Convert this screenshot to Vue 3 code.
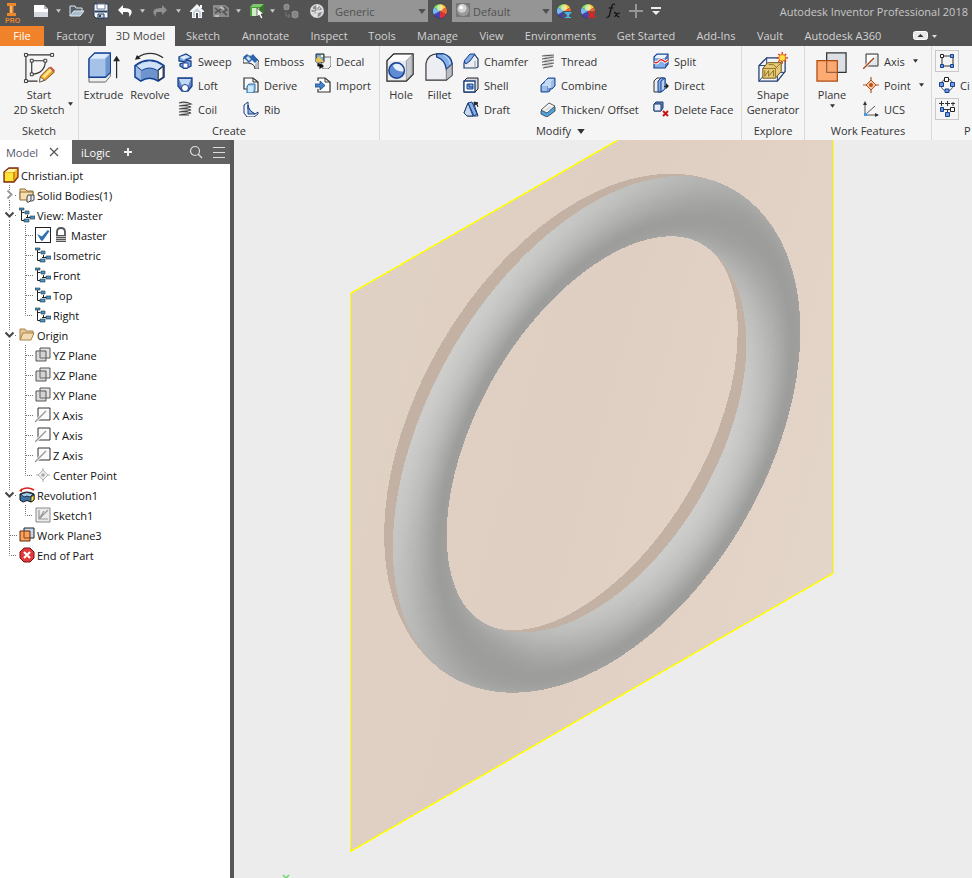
<script setup>
import { ref } from 'vue'

const caret = '<path d="M0 0h6L3 4z" fill="currentColor"/>'
const wheel = '<circle cx="8" cy="8" r="7.5" fill="#2b3a5c"/><path d="M8 8V1a7 7 0 0 1 6.1 3.5z" fill="#f6c53a"/><path d="M8 8l6.100-3.500a7 7 0 0 1 0 7z" fill="#ee6a2a"/><path d="M8 8l6.100 3.500A7 7 0 0 1 8 15z" fill="#d8323c"/><path d="M8 8v7a7 7 0 0 1-6.100-3.500z" fill="#4a3fb0"/><path d="M8 8l-6.100 3.500a7 7 0 0 1 0-7z" fill="#78b8ee"/><path d="M8 8L1.900 4.500A7 7 0 0 1 8 1z" fill="#8cd860"/><circle cx="8" cy="5" r="3" fill="#fff" opacity=".5"/>'

const icons = {
  new: '<path d="M1 2h10l4 4v8H1z" fill="#fff"/><path d="M1 9h14v5H1z" fill="#d4d8df"/><path d="M11 2v4h4z" fill="#aeb6c0"/>',
  open: '<path d="M1 13V3h5l1 2h6v3" fill="#535f6b" stroke="#e3e9ef"/><path d="M5 8h10l-4 5H1z" fill="#a9bccd" stroke="#e3e9ef"/>',
  save: '<path d="M1 1h14v14H3l-2-2z" fill="#f2f5fa" stroke="#29405f"/><path d="M4 1h8v5H4z" fill="#fff" stroke="#6a7a94"/><path d="M1.500 7.500h13v2h-13z" fill="#29405f"/><path d="M5 11h6v4H5z" fill="#cfd6e2" stroke="#29405f"/><path d="M6 12h2v2H6z" fill="#29405f"/>',
  undo: '<path d="M6 2L1 7l5 5V9h4q3 0 2 5 4-4 2-7-2-2-8-2z" fill="#fff"/>',
  redo: '<path d="M10 2l5 5-5 5V9H6q-3 0-2 5-4-4-2-7 2-2 8-2z" fill="#919191"/>',
  home: '<path d="M8 1L1 8v1h2v6h4v-5h2v5h4V9h2V8z" fill="#f3f5f8"/><path d="M11 2h2v3h-2z" fill="#fff"/><path d="M8 5l4 4v5h-2V9H6v5H4V9z" fill="#c8ced8"/><path d="M6 9h4v6H6z" fill="#fff"/><path d="M7 10h2v5H7z" fill="#4a515e"/>',
  update: '<path d="M0 2h12l4 3v9H0z" fill="#8b8b8b"/><path d="M2 10l9-6 3 3-4 2 4 3M2 5l6 5" fill="none" stroke="#555" stroke-width="1.600"/><path d="M7 4l4 2M2 13h4" stroke="#bdbdbd" stroke-width="2"/>',
  select: '<path d="M1 4l3-3h11l-3 3z" fill="#7cc86a"/><path d="M1 4h10v9H1z" fill="#4e9a3d"/><path d="M3 5h7v8H3z" fill="#cfeec6"/><path d="M12 4l3-3v9l-3 3z" fill="#2f7a22"/><path d="M8 5l7 6h-3l2 4-2 1-2-4-2 2z" fill="#fff" stroke="#333" stroke-width=".7"/>',
  link: '<g fill="#858585" stroke="#a4a4a4" stroke-width=".6"><path d="M1 2q3-2 5 0v4q-3 2-5 0zM9 9q3-2 6 0v5q-3 2-6 0z"/></g><path d="M3 9v4h4M5 11l2 2-2 2" fill="none" stroke="#777"/>',
  globe: '<circle cx="8" cy="8" r="7" fill="#d8d8d8"/><path d="M4 4l3-2 1 3 3-2 2 4-4 1-1 3-3-1-3-2 2-2zM9 10l4-1-2 4-3 1z" fill="#8e8e8e"/><path d="M2 6l4 1M8 2v12M2 10l12-3M5 14l7-11" stroke="#f2f2f2" stroke-width=".8"/>',
  wheel,
  wheeldown: wheel + '<path d="M7 8h9v8H7z" fill="#535353"/><path d="M8 9h8l-3 3v2h2v1H9v-1h2v-2z" fill="#45b8f0"/>',
  wheelx: wheel + '<path d="M9 9l6 6M15 9l-6 6" stroke="#535353" stroke-width="4"/><path d="M9 9l6 6M15 9l-6 6" stroke="#f02020" stroke-width="1.800"/>',
  fx: '<path d="M10 1.500Q7.500 0 6.500 4L4.500 12q-1 3-3 2M3.500 5h5" fill="none" stroke="#111" stroke-width="1.200"/><path d="M9 10q2-1 2.500 1.500T14.500 14M15 10q-3 0-5.500 4" fill="none" stroke="#111" stroke-width="1.200"/>',
  plus: '<path d="M8 1v14M1 8h14" stroke="#969696" stroke-width="2"/>',
  more: '<path d="M3 4h10v2H3zM4 8h8l-4 4z" fill="#eee"/>',
  ball: '<path d="M0 0h16v16H0z" fill="#777"/><circle cx="8" cy="8" r="7" fill="#9c9c9c"/><circle cx="7" cy="6" r="5" fill="#d2d2d2"/><circle cx="6" cy="5" r="2" fill="#fff"/>',

  start: '<g fill="none" stroke="#333" stroke-width="1.200"><path d="M30 3H3v27h12"/><path d="M9 9v14q14-1 14-14z"/></g><g fill="#fff" stroke="#333"><path d="M1.500 1.500h3v3h-3zM28.500 1.500h3v3h-3zM1.500 28.500h3v3h-3zM7.500 7.500h3v3h-3zM21.500 7.500h3v3h-3zM7.500 21.500h3v3h-3z"/></g><path d="M17 31l1-6L27 16l5 5-9 8z" fill="#f3a62a" stroke="#6a4a20"/><path d="M20 25l8-8 2 2-8 8z" fill="#ffe58a"/><path d="M27 16l2-1 4 4-1 2z" fill="#c75a50"/><path d="M17 31l1-5 4 3z" fill="#fff" stroke="#555" stroke-width=".7"/>',
  extrude: '<path d="M1 8l6-6h16v23l-5 6H1z" fill="#eceef0" stroke="#666"/><path d="M1 7l6-6h16v20l-5 5H1z" fill="#a5c3e8" stroke="#123f94" stroke-width="1.400"/><path d="M2 7l5-5h15l-5 5z" fill="#dceafa"/><path d="M18 7l4-4v18l-4 4z" fill="#6d94cc"/><path d="M29.500 27V6M27 9l2.500-4L32 9z" fill="#222" stroke="#222" stroke-width="1.200"/>',
  revolve: '<path d="M1 14q15-11 30 0v12l-6 4q-9-6-18 0l-6-4z" fill="#6d94cc" stroke="#123f94" stroke-width="1.500"/><path d="M2 14q14-10 28 0l-6 5q-8-5-16 0z" fill="#cfe2f7" stroke="#123f94"/><path d="M25 19l5-4v11l-5 3z" fill="#fff" stroke="#222"/><path d="M2 15l5 4v10l-5-4z" fill="#9dbce4"/><path d="M3 6q14-9 27 0" fill="none" stroke="#333" stroke-width="1.300"/><path d="M1 8l2-5 4 4z" fill="#222"/>',
  sweep: '<path d="M14 4L9 1 2 4v4l6 1-5 2v2l5 3 6-3V8L9 7l5-2z" fill="#86a9dc" stroke="#17408f" stroke-width="1.300"/><path d="M3 4l6-2 4 2-4 1-2 2z" fill="#dceafa"/><path d="M6 10h5v5H6z" fill="#fff" stroke="#17408f"/>',
  loft: '<path d="M1 1h14v8l-4 5H5L1 9z" fill="#5d82be" stroke="#17408f" stroke-width="1.300"/><path d="M2 2h12l-3 7H5z" fill="#c3daf4"/><circle cx="8" cy="11" r="3.500" fill="#fff" stroke="#17408f"/>',
  coil: '<g fill="none" stroke="#444" stroke-width="1.200"><path d="M2 2q6-2 12 1L2 5q6-1 12 1L2 8q6-1 12 1L2 11q6-1 12 1L2 14h10"/></g><path d="M4 3l8 0M4 6h8M4 9h8M4 12h8" stroke="#bbb" stroke-width=".8"/>',
  emboss: '<path d="M0 6l5-3q9 0 11 6v7h-4Q12 9 0 10z" fill="#f4f6f8" stroke="#333"/><path d="M0 4l4-3 3 3 3-3 5 6-3 3-3-3-3 3z" fill="#2e63ad"/><path d="M3 5l2-2 3 3-2 2z" fill="#cfe2f7"/><path d="M12 11l3-3v7h-3z" fill="#b9bec6"/>',
  derive: '<path d="M4 12H1V1h9l5 4v10h-4" fill="#f8f9fa" stroke="#333" stroke-width="1.200"/><path d="M10 1v4h5" fill="none" stroke="#333"/><path d="M4 9l2-2h6v6l-2 3H4z" fill="#9fcbea" stroke="#276da5"/><path d="M5 9h5v6H5z" fill="#cfe7f7"/>',
  rib: '<path d="M1 4l4-3v7l7 5 3-2v2l-4 3H4l-3-4z" fill="#f2f4f7" stroke="#1f3d6f"/><path d="M5 4q1 6 7 9H5z" fill="#86b0e4" stroke="#17408f"/>',
  decal: '<path d="M6 7l3-3h7v9l-3 3H8z" fill="#eef0f2" stroke="#666"/><path d="M1 1h8v8H1z" fill="#6ea3da" stroke="#222"/><path d="M1 6l3-3 5 6H1z" fill="#e0c256"/><circle cx="7" cy="3" r="1.200" fill="#fff8b0"/><path d="M3 10v3h4M5 11l3 2-3 2z" fill="#111" stroke="#111" stroke-width="1.200"/>',
  import: '<path d="M3 4V1h7l5 4v10H3v-3" fill="#fff" stroke="#333" stroke-width="1.200"/><path d="M10 1v4h5" fill="none" stroke="#333"/><path d="M0 7h5V4l5 4.500L5 13v-3H0z" fill="#3f86cf" stroke="#17407a" stroke-width=".8"/>',
  hole: '<path d="M2 9l7-7h20v21l-7 7H2z" fill="#e9ebef" stroke="#222" stroke-width="1.300"/><path d="M3 9l6-6h19l-6 6z" fill="#fff"/><path d="M22 9l6-6v20l-6 6z" fill="#c2c6cd" stroke="#777" stroke-width=".6"/><circle cx="12" cy="19" r="8" fill="#5f8cd2" stroke="#17408f" stroke-width="1.500"/><path d="M12 12a7 7 0 0 1 7 8q-8 1-11-6 2-2 4-2z" fill="#e5eefa"/>',
  fillet: '<path d="M2 29V12Q4 2 14 2h6l9 10v12l-6 5z" fill="#eceef1" stroke="#333" stroke-width="1.200"/><path d="M13 2h7q8 2 9 10l-6 6Q22 8 13 5z" fill="#86aee6" stroke="#17408f" stroke-width="1.300"/><path d="M23 18l6-5v11l-6 5z" fill="#b7bcc5" stroke="#555" stroke-width=".7"/><path d="M20 3q6 3 7 10" stroke="#cfe2f7" fill="none"/>',
  chamfer: '<path d="M1 10l7-8h4l3 4v8l-2 1H1z" fill="#eceef1" stroke="#1f3d6f" stroke-width="1.200"/><path d="M1 8l6-7h5L7 8l-4 3z" fill="#86aee6" stroke="#17408f"/><path d="M12 8v7" stroke="#999"/>',
  shell: '<path d="M1 4l3-3h11v11l-3 3H1z" fill="#d7dbe2" stroke="#222"/><path d="M1 4h11v11H1z" fill="#fff" stroke="#1c3f7e" stroke-width="1.300"/><path d="M4 7h6v5H4z" fill="#86aee6" stroke="#17408f"/><path d="M6 7v3h4" fill="none" stroke="#17408f"/>',
  draft: '<path d="M1 12L5 2l6 1 4 12H9l-5 0z" fill="#eceef1" stroke="#1f3d6f"/><path d="M5 2l4-1 5 12-3 2z" fill="#86aee6" stroke="#17408f"/><path d="M5 2l5 13H4l-3-3z" fill="#c5d9f0" stroke="#1f3d6f"/><path d="M15 6q0-3-3-4M12 4l-1-3 4 1z" stroke="#222" fill="#222"/>',
  thread: '<path d="M4 1h8v14H4z" fill="#e4e4e4"/><path d="M2 3l12-1M2 6l12-2M2 9l12-2M2 12l12-2M3 15l10-2" stroke="#555" stroke-width="1.100"/><path d="M5 4.500l8-1M5 7.500l8-1M5 10.500l8-1M5 13.500l8-1" stroke="#aaa" stroke-width=".7"/>',
  combine: '<path d="M5 4l3-3h7v8l-3 3h-2v2l-2 1H1V8l3-3z" fill="#6f98d0" stroke="#1f4a96"/><path d="M5 4l3-2h6l-3 3v6H8V9H2V8l3-2z" fill="#c3daf4"/><path d="M2 9h5v5H2zM11 5l3-3v7l-3 2z" fill="#9dbde6"/>',
  thicken: '<path d="M1 10l8-7 6 3v4l-8 6-6-3z" fill="#4fa3df" stroke="#333" stroke-width=".8"/><path d="M1 9l8-7 6 3-8 7z" fill="#f7f7f7" stroke="#333" stroke-width=".8"/><path d="M4 9l5-4 3 1-5 4z" fill="#dde0e4"/>',
  split: '<path d="M1 4l3-3h11v10l-3 4H1z" fill="#86aee6" stroke="#17408f" stroke-width="1.200"/><path d="M2 4l2-2h10l-2 3H2z" fill="#eef4fb"/><path d="M12 5l2-3v9l-2 3z" fill="#4d73b4"/><path d="M1 9q3 2 5-1t6 1l3-2" fill="none" stroke="#fff" stroke-width="3"/><path d="M1 9q3 2 5-1t6 1l3-2" fill="none" stroke="#e02020" stroke-width="1.300"/>',
  direct: '<path d="M1 4l3-3h7v11l-3 3H1z" fill="#eceef1" stroke="#333"/><path d="M5 4l3-3h4v11l-4 3H5z" fill="#86aee6" stroke="#17408f"/><path d="M8 4l4-3v11l-4 3z" fill="#b9d2f0" stroke="#17408f"/><path d="M11 9h2V6l3 3-3 3v-2h-2z" fill="#222"/>',
  delete: '<path d="M1 3l2-2h7v6l-2 3H1z" fill="#5f86c4" stroke="#1f3d6f"/><path d="M1 3h7v7H1z" fill="#e3ecf8" stroke="#1f3d6f"/><path d="M10 10l5 5M15 10l-5 5" stroke="#c81414" stroke-width="2"/>',
  shape: '<path d="M2 14L10 6h19v14l-8 10H2z" fill="#f2f5fa" stroke="#1f3d6f" stroke-width="1.300"/><path d="M2 14h19v16M21 14l8-8M10 6v15h19M10 21l-8 9" fill="none" stroke="#1f3d6f"/><path d="M6 17l5-6h14v9l-6 7H6z" fill="#e7cb78" stroke="#6f5512"/><path d="M6 17h13v10M19 17l6-6M8 19v6l4-6v6l5-6v6M12 13h5l4 4" fill="none" stroke="#8f7428"/><path d="M26 0v12M20 6h12M22 2l8 8M30 2l-8 8" stroke="#e12a14" stroke-width="1.300"/><circle cx="26" cy="6" r="3.500" fill="#ffe344" stroke="#e86b14"/>',
  plane: '<path d="M11 1h20v20H11z" fill="#dce0e6" stroke="#333" stroke-width="1.300"/><path d="M1 9h21v21H1z" fill="#ff9d5c" fill-opacity=".85" stroke="#b04c12" stroke-width="1.300"/><path d="M11 9v12h11" fill="none" stroke="#8a5a3c"/>',
  axis: '<path d="M3 1h12v12H3z" fill="#e3e6ea" stroke="#333"/><path d="M4 2h10L4 12z" fill="#fff"/><path d="M0 16L11 5" stroke="#fff" stroke-width="3"/><path d="M0 16L11 5" stroke="#a3481a" stroke-width="1.500"/>',
  point: '<path d="M8 3l5 5-5 5-5-5z" fill="#f7c6a0" stroke="#b25420"/><path d="M8 0v4M8 12v4M0 8h4M12 8h4" stroke="#b25420" stroke-width="1.200"/><circle cx="8" cy="8" r="2" fill="#b25420"/>',
  ucs: '<path d="M2 14V2M2 14h13M2 14L12 5" fill="none" stroke="#555"/><path d="M0 4l2-4 2 4zM12 12l4 2-4 2z" fill="#333"/><path d="M1 12h3v3H1z" fill="#3f9be8"/>',
  rect: '<path d="M3 3h11v10H3z" fill="none" stroke="#333"/><g fill="#6f9be0" stroke="#17408f"><path d="M1.500 11.500h3v3h-3zM11.500 11.500h3v3h-3zM11.500 1.500h3v3h-3z"/></g><path d="M1.500 1.500h3v3h-3z" fill="#fff" stroke="#222"/>',
  circ: '<circle cx="8" cy="8" r="6" fill="none" stroke="#555"/><g fill="#6f9be0" stroke="#17408f"><path d="M.500 5.500h4v4h-4zM11.500 5.500h4v4h-4zM6 12h4v3.500H6z"/></g><path d="M5.500.500h4v4h-4z" fill="#fff" stroke="#222"/>',
  sketchpat: '<path d="M2.500 0v5M0 2.500h5M8.500 0v5M6 2.500h5M14 1v4M12 2.500h4" stroke="#333"/><path d="M3 8.500h11M8.500 8v6" stroke="#333"/><g fill="#6f9be0" stroke="#17408f"><path d="M1.500 6.500h3v4h-3zM6.500 11.500h4v4h-4z"/></g><path d="M11.500 6.500h4v4h-4z" fill="#fff" stroke="#222"/>',

  part: '<path d="M1 5l5-4h9v9l-4 5H1z" fill="#f5b81c" stroke="#7a2b12" stroke-width="1.300"/><path d="M2 5l4-3h8l-3 3z" fill="#fff6a8"/><path d="M2 6h8v8H2z" fill="#ffe437"/><path d="M11 5v10" stroke="#b5651a"/>',
  bodies: '<path d="M1 12V2h5l2 2h6v4" fill="#f4d9a0" stroke="#8a6a3a"/><path d="M1 12V5h13v4l-4 4H1z" fill="#f7dfad" stroke="#8a6a3a"/><path d="M8 10l1-2h3v5l-2 2H8zM12 8h3v5l-2 1h-2" fill="#e8ebef" stroke="#444"/>',
  view: '<path d="M2.500 3v10.500h3M2.500 5.500h3M8.500 8v3M7 10.500h4" fill="none" stroke="#222"/><path d="M0 1h5v2H0zM6 4h4v3H6zM11 9h5v3h-5zM5 12h5v3H5z" fill="#4a94cc" stroke="#233" stroke-width=".6"/>',
  lock: '<path d="M4 8V5q0-4 4-4t4 4v3" fill="none" stroke="#555" stroke-width="1.800"/><path d="M3 8h10v7H3z" fill="#555"/><path d="M3 9.500h10M3 11.500h10M3 13.500h10" stroke="#ddd" stroke-width=".8"/>',
  folder: '<path d="M1 13V2h5l1 2h7v3" fill="#e8c68e" stroke="#a8844e"/><path d="M1 13l3-7h11l-3 7z" fill="#f2dab2" stroke="#a8844e"/>',
  gplane: '<path d="M5 1h10v10H5z" fill="#e3e3e3" stroke="#555"/><path d="M1 4h10v10H1z" fill="#cfcfcf" fill-opacity=".8" stroke="#555"/><path d="M5 5v6h6" fill="none" stroke="#777"/>',
  gaxis: '<path d="M3 1h12v12H3z" fill="#fafafa" stroke="#333"/><path d="M0 15L11 4" stroke="#fff" stroke-width="3"/><path d="M0 15L11 4" stroke="#999" stroke-width="1.500"/>',
  gpoint: '<path d="M8 3l5 5-5 5-5-5z" fill="#eee" stroke="#b5b5b5"/><path d="M8 1v3M8 12v3M1 8h3M12 8h3" stroke="#aaa"/><circle cx="8" cy="8" r="1.800" fill="#aaa"/>',
  revolution: '<path d="M1 7q7-4 14 0v6l-3 2q-4-3-8 0l-3-2z" fill="#3c74a8" stroke="#111"/><path d="M2 7q6-3 12 0l-3 3q-3-2-6 0z" fill="#a8cdea" stroke="#111" stroke-width=".7"/><path d="M12 10l3-2v5l-3 2z" fill="#ffe33d" stroke="#111" stroke-width=".7"/><path d="M2 3q6-4 13 0" fill="none" stroke="#e02020" stroke-width="1.500"/><path d="M0 4l3-3v4z" fill="#e02020"/>',
  gsketch: '<path d="M1 1h14v14H1z" fill="#ececec" stroke="#888"/><path d="M4 3v9h9M4 12l9-9M4 12l5-8" fill="none" stroke="#999" stroke-width="1.200"/>',
  oplane: '<path d="M5 1h10v10H5z" fill="#c8daf0" stroke="#222"/><path d="M1 4h10v10H1z" fill="#ff9a4c" fill-opacity=".9" stroke="#5a2a0a"/><path d="M5 5v6h6" fill="none" stroke="#8a4a1a"/>',
  end: '<path d="M5 1h6l4 4v6l-4 4H5l-4-4V5z" fill="#e23a3a" stroke="#7a0f0f"/><path d="M5 5l6 6M11 5l-6 6" stroke="#fff" stroke-width="2.200"/>',
}

const quick = [
  'new', '', 'open', 'save', 'undo', '', 'redo', '', 'home', 'update', '', 'select', '', 'link', 'globe',
]
const labels = {
  new: 'New', open: 'Open', save: 'Save', undo: 'Undo', redo: 'Redo', home: 'Home', update: 'Update',
  select: 'Select', link: 'Link', globe: 'Material', wheeldown: 'Adjust', wheelx: 'Clear', fx: 'Parameters', plus: 'Add', more: 'Customize',
}
const tail = ['wheeldown', 'wheelx', 'fx', 'plus', 'more']
const tabs = ['File', 'Factory', '3D Model', 'Sketch', 'Annotate', 'Inspect', 'Tools', 'Manage', 'View', 'Environments', 'Get Started', 'Add-Ins', 'Vault', 'Autodesk A360']

const groups = [
  { key: 'sketch', label: 'Sketch', big: [{ i: 'start', t: ['Start', '2D Sketch'], side: true }] },
  {
    key: 'create', label: 'Create',
    big: [{ i: 'extrude', t: ['Extrude'] }, { i: 'revolve', t: ['Revolve'] }],
    cols: [
      [{ i: 'sweep', t: 'Sweep' }, { i: 'loft', t: 'Loft' }, { i: 'coil', t: 'Coil' }],
      [{ i: 'emboss', t: 'Emboss' }, { i: 'derive', t: 'Derive' }, { i: 'rib', t: 'Rib' }],
      [{ i: 'decal', t: 'Decal' }, { i: 'import', t: 'Import' }],
    ],
  },
  {
    key: 'modify', label: 'Modify', drop: true,
    big: [{ i: 'hole', t: ['Hole'] }, { i: 'fillet', t: ['Fillet'] }],
    cols: [
      [{ i: 'chamfer', t: 'Chamfer' }, { i: 'shell', t: 'Shell' }, { i: 'draft', t: 'Draft' }],
      [{ i: 'thread', t: 'Thread' }, { i: 'combine', t: 'Combine' }, { i: 'thicken', t: 'Thicken/ Offset' }],
      [{ i: 'split', t: 'Split' }, { i: 'direct', t: 'Direct' }, { i: 'delete', t: 'Delete Face' }],
    ],
  },
  { key: 'explore', label: 'Explore', big: [{ i: 'shape', t: ['Shape', 'Generator'] }] },
  {
    key: 'work', label: 'Work Features',
    big: [{ i: 'plane', t: ['Plane'], below: true }],
    cols: [[{ i: 'axis', t: 'Axis', drop: true }, { i: 'point', t: 'Point', drop: true }, { i: 'ucs', t: 'UCS' }]],
  },
]

const tree = [
  { g: '', i: 'part', t: 'Christian.ipt' },
  { g: 'c', i: 'bodies', t: 'Solid Bodies(1)' },
  { g: 'o', i: 'view', t: 'View: Master' },
  { g: 'vt', i: 'check', t: 'Master' },
  { g: 'vt', i: 'view', t: 'Isometric' },
  { g: 'vt', i: 'view', t: 'Front' },
  { g: 'vt', i: 'view', t: 'Top' },
  { g: 'vl', i: 'view', t: 'Right' },
  { g: 'o', i: 'folder', t: 'Origin' },
  { g: 'vt', i: 'gplane', t: 'YZ Plane' },
  { g: 'vt', i: 'gplane', t: 'XZ Plane' },
  { g: 'vt', i: 'gplane', t: 'XY Plane' },
  { g: 'vt', i: 'gaxis', t: 'X Axis' },
  { g: 'vt', i: 'gaxis', t: 'Y Axis' },
  { g: 'vt', i: 'gaxis', t: 'Z Axis' },
  { g: 'vl', i: 'gpoint', t: 'Center Point' },
  { g: 'o', i: 'revolution', t: 'Revolution1' },
  { g: 'vl', i: 'gsketch', t: 'Sketch1' },
  { g: 't', i: 'oplane', t: 'Work Plane3' },
  { g: 'l', i: 'end', t: 'End of Part' },
]
const dots = (d) => `<path d="${d}" fill="none" stroke="#777" stroke-dasharray="1 1"/>`
const guides = {
  v: dots('M9.500 0v20'),
  t: dots('M9.500 0v20M10 10.500h7'),
  l: dots('M9.500 0v10.500h7.500'),
  o: dots('M9.500 0v5M9.500 15v5M15 10.500h2') + '<path d="M5.500 7.500l4 4 4-4" fill="none" stroke="#444" stroke-width="2"/>',
  c: dots('M9.500 0v5M9.500 15v5M15 10.500h2') + '<path d="M7.500 5.500l4 4-4 4" fill="none" stroke="#999" stroke-width="2"/>',
}

const material = ref('Generic')
const appearance = ref('Default')
const masterOn = ref(true)

// Isometric torus: the half in front of the work plane, as shaded facets sorted by depth.
const R = 250
const r = 31
const cx = 358
const cy = 293
const k = Math.sqrt(1 / 3)
const s = Math.sqrt(2 / 3)
function project(a, b) {
  const w = R + r * Math.cos(b)
  const u = w * Math.cos(a)
  const m = k * w * Math.sin(a) + s * r * Math.sin(b)
  const x = cx + u * 0.5 + m * 0.866
  const y = cy - u * 0.866 + m * 0.5
  return `${x.toFixed(1)},${y.toFixed(1)}`
}
const NA = 180
const NB = 44
const facets = []
for (let i = 0; i < NA; i++) {
  for (let j = 0; j < NB; j++) {
    const a0 = (i / NA) * 2 * Math.PI
    const a1 = ((i + 1) / NA) * 2 * Math.PI
    const b0 = (j / NB) * Math.PI
    const b1 = ((j + 1) / NB) * Math.PI
    const a = (a0 + a1) / 2
    const b = (b0 + b1) / 2
    const facing = -s * Math.cos(b) * Math.sin(a) + k * Math.sin(b)
    if (facing < -0.06) continue
    const lit = Math.max(0, -Math.cos(b) * Math.sin(a)) ** 1.2
    const rim = (Math.cos(b) * Math.cos(a)) ** 2
    const c = Math.round(157 + 48 * lit + 16 * rim)
    facets.push({
      p: [project(a0, b0), project(a1, b0), project(a1, b1), project(a0, b1)].join(' '),
      f: `rgb(${c},${c},${c - 2})`,
      z: -s * (R + r * Math.cos(b)) * Math.sin(a) + k * r * Math.sin(b),
    })
  }
}
facets.sort((p, q) => p.z - q.z)
</script>

<template>
  <div class="app">
    <header class="titlebar">
      <div class="logo">
        <svg viewBox="0 0 14 15" aria-hidden="true"><path d="M2 1h9v3H8.500v7H11v3H2v-3h2.500V4H2z" fill="#e8862c" /><path d="M5 4h2v7H5z" fill="#ffb765" /></svg>
        <span class="pro">PRO</span>
      </div>
      <template v-for="(q, n) in quick" :key="n">
        <button v-if="q" class="tool" :aria-label="labels[q]"><svg viewBox="0 0 16 16" v-html="icons[q]" /></button>
        <button v-else class="tool drop" aria-label="More"><svg viewBox="0 0 6 4" v-html="caret" /></button>
      </template>
      <div class="combo">
        <select v-model="material" aria-label="Material"><option>Generic</option></select>
        <svg class="arrow" viewBox="0 0 6 4" v-html="caret" />
      </div>
      <button class="tool" aria-label="Appearance"><svg viewBox="0 0 16 16" v-html="icons.wheel" /></button>
      <div class="combo iconic">
        <svg class="ball" viewBox="0 0 16 16" v-html="icons.ball" />
        <select v-model="appearance" aria-label="Appearance style"><option>Default</option></select>
        <svg class="arrow" viewBox="0 0 6 4" v-html="caret" />
      </div>
      <button v-for="q in tail" :key="q" class="tool" :aria-label="labels[q]"><svg viewBox="0 0 16 16" v-html="icons[q]" /></button>
      <div class="title">Autodesk Inventor Professional 2018</div>
    </header>

    <nav class="tabs">
      <button v-for="t in tabs" :key="t" class="tab" :class="{ file: t === 'File', active: t === '3D Model' }">{{ t }}</button>
      <button class="collapse" aria-label="Minimize ribbon">
        <svg viewBox="0 0 26 10"><rect x=".5" y=".5" width="14" height="8" rx="2" fill="#e8e8e8" stroke="#fff" /><path d="M4.500 6h6l-3-3z" fill="#333" /><path d="M19 4h5l-2.500 3z" fill="#ddd" /></svg>
      </button>
    </nav>

    <div class="ribbon">
      <section v-for="g in groups" :key="g.key" class="group" :class="g.key">
        <div class="body">
          <button v-for="b in g.big" :key="b.i" class="big">
            <svg class="icon" viewBox="0 0 33 33" v-html="icons[b.i]" />
            <span v-for="l in b.t" :key="l">{{ l }}</span>
            <svg v-if="b.below" class="mini" viewBox="0 0 6 4" v-html="caret" />
            <svg v-if="b.side" class="mini side" viewBox="0 0 6 4" v-html="caret" />
          </button>
          <div v-for="(c, n) in g.cols" :key="n" class="col">
            <button v-for="b in c" :key="b.i" class="small">
              <svg class="icon" viewBox="0 0 16 16" v-html="icons[b.i]" />
              <span>{{ b.t }}</span>
              <svg v-if="b.drop" class="mini" viewBox="0 0 6 4" v-html="caret" />
            </button>
          </div>
        </div>
        <div class="label">{{ g.label }}<svg v-if="g.drop" viewBox="0 0 6 4" v-html="caret" /></div>
      </section>
      <section class="group pattern">
        <div class="body">
          <div class="col">
            <button class="small boxed" aria-label="Rectangular"><svg class="icon" viewBox="0 0 16 16" v-html="icons.rect" /></button>
            <button class="small"><svg class="icon" viewBox="0 0 16 16" v-html="icons.circ" /><span>Ci</span></button>
            <button class="small boxed" aria-label="Sketch driven"><svg class="icon" viewBox="0 0 16 16" v-html="icons.sketchpat" /></button>
          </div>
        </div>
        <div class="label">P</div>
      </section>
    </div>

    <main class="main">
      <aside class="browser">
        <div class="panel-tabs">
          <button class="ptab on">Model</button>
          <button class="close" aria-label="Close"><svg viewBox="0 0 10 10"><path d="M1 1l8 8M9 1L1 9" stroke="#555" stroke-width="1.200" /></svg></button>
          <button class="ptab">iLogic</button>
          <button class="pbtn add" aria-label="Add tab"><svg viewBox="0 0 14 14"><path d="M7 3v8M3 7h8" stroke="#eee" stroke-width="2" /></svg></button>
          <span class="grow"></span>
          <button class="pbtn" aria-label="Search"><svg viewBox="0 0 14 14"><circle cx="6" cy="6" r="4.500" fill="none" stroke="#ddd" stroke-width="1.200" /><path d="M9 9l4 4" stroke="#ddd" stroke-width="1.300" /></svg></button>
          <button class="pbtn" aria-label="Menu"><svg viewBox="0 0 14 14"><path d="M1 2.500h12M1 7.500h12M1 12.500h12" stroke="#ddd" /></svg></button>
        </div>
        <ul class="tree">
          <li v-for="(row, n) in tree" :key="n">
            <svg v-for="(g, m) in row.g" :key="m" class="guide" viewBox="0 0 16 20" v-html="guides[g]" />
            <template v-if="row.i === 'check'">
              <input id="master" v-model="masterOn" type="checkbox" />
              <svg class="icon lock" viewBox="0 0 16 16" v-html="icons.lock" />
              <label for="master">{{ row.t }}</label>
            </template>
            <template v-else>
              <svg class="icon" viewBox="0 0 16 16" v-html="icons[row.i]" />
              <span>{{ row.t }}</span>
            </template>
          </li>
        </ul>
      </aside>

      <div class="viewport">
        <svg class="scene" viewBox="0 0 738 738" preserveAspectRatio="xMinYMin slice" aria-label="Model view">
          <defs>
            <linearGradient id="sheet" x1="0" y1="0.300" x2="1" y2="0.700">
              <stop offset="0" stop-color="#dfd1c4" />
              <stop offset="0.450" stop-color="#dfcfc2" />
              <stop offset="1" stop-color="#e4d6c9" />
            </linearGradient>
          </defs>
          <path d="M116.500 153.500L384 0h215.500v433L116.500 711.500z" fill="url(#sheet)" />
          <path d="M384 0L116.500 153.500v558L599.500 433V0" fill="none" stroke="#ffff00" stroke-width="1.500" shape-rendering="crispEdges" />
          <ellipse :cx="cx" :cy="cy" :rx="R" :ry="R * k" transform="rotate(-60 358 293)" fill="none" stroke="#c3b2a3" :stroke-width="r * 2" shape-rendering="crispEdges" />
          <g shape-rendering="crispEdges" stroke-width="1">
            <polygon v-for="(q, n) in facets" :key="n" :points="q.p" :fill="q.f" :stroke="q.f" />
          </g>
          <path d="M49 735l3 3 3-3" fill="none" stroke="#6fd66f" stroke-width="1.500" />
        </svg>
      </div>
    </main>
  </div>
</template>

<style>
body { margin: 0; }
</style>

<style scoped>
.app {
  display: flex;
  flex-direction: column;
  min-height: 100vh;
  overflow: hidden;
  font: 11px/15px "Open Sans", "Noto Sans", sans-serif;
  color: #333;
  background: #ececec;
}
button {
  border: 0;
  padding: 0;
  margin: 0;
  background: none;
  font: inherit;
  color: inherit;
  white-space: nowrap;
}
svg { display: block; flex: none; }
.titlebar {
  display: grid;
  grid-template-columns: 30px 22px 12px 26px 22px 26px 8px 28px 8px 30px 18px 16px 22px 8px 29px 23px 100px 24px 100px 24px 24px 25px 22px 18px 1fr;
  height: 26px;
  background: #535353;
  color: #c8c8c8;
}
.logo { padding: 2px 0 0 5px; }
.logo svg { width: 14px; height: 15px; }
.pro { display: block; font: bold 7px/8px "Liberation Sans", sans-serif; color: #e8862c; }
.tool { display: flex; align-items: center; justify-content: center; height: 22px; }
.tool svg { width: 16px; height: 16px; }
.tool.drop svg { width: 5px; height: 4px; }
.combo { position: relative; height: 22px; background: #959595; }
.combo select {
  appearance: none;
  width: 100%;
  height: 22px;
  border: 0;
  padding: 0 16px 0 7px;
  background: transparent;
  color: #505050;
  font: inherit;
}
.combo.iconic select { padding-left: 21px; }
.combo .arrow { position: absolute; right: 2px; top: 9px; width: 8px; height: 5px; color: #505050; }
.combo .ball { position: absolute; left: 4px; top: 3px; width: 14px; height: 14px; }
.title { padding: 4px 4px 0 0; text-align: right; white-space: nowrap; }
.tabs {
  display: grid;
  grid-template-columns: 44px 62px 69px 56px 69px 58px 48px 63px 45px 93px 78px 62px 46px 100px 1fr;
  height: 20px;
  background: #535353;
  color: #d2d2d2;
}
.tab { line-height: 20px; text-align: center; }
.tab.file { background: #f08229; color: #fff; }
.tab.active { background: #f5f5f5; color: #444; }
.collapse { padding-left: 20px; }
.collapse svg { width: 26px; height: 10px; }
.ribbon { display: flex; height: 94px; background: #f5f5f5; overflow: hidden; }
.group { box-sizing: border-box; flex: none; border-right: 1px solid #dadada; overflow: hidden; }
.body { display: grid; height: 76px; }
.sketch { width: 79px; }
.create { width: 301px; }
.modify { width: 362px; }
.explore { width: 63px; }
.work { width: 127px; }
.pattern { flex: 1 0 40px; width: 40px; border-right: 0; }
.create .body { grid-template-columns: 47px 46px 66px 72px 1fr; padding-left: 1px; }
.modify .body { grid-template-columns: 38px 39px 77px 113px 1fr; padding-left: 2px; }
.work .body { grid-template-columns: 54px 1fr; }
.label { display: flex; align-items: center; justify-content: center; height: 18px; line-height: 18px; }
.label svg { width: 8px; height: 5px; margin-left: 6px; }
.big { position: relative; display: flex; flex-direction: column; align-items: center; padding-top: 6px; }
.big .icon { width: 32px; height: 32px; margin-bottom: 3px; }
.mini { width: 5px; height: 4px; }
.big .mini { margin-top: 2px; }
.big .side { position: absolute; right: 5px; bottom: 16px; }
.col { padding: 3px 0 0 4px; }
.small { display: flex; align-items: center; gap: 5px; height: 24px; }
.small .icon { width: 16px; height: 16px; }
.small .mini { margin-left: 3px; }
.pattern .col { padding-left: 3px; }
.pattern .small { padding: 0 4px; }
.pattern .boxed { box-sizing: border-box; height: 22px; margin: 1px 0; padding: 0 3px; border: 1px solid #c8c8c8; }
.pattern .label { justify-content: flex-start; padding-left: 32px; }
.main { display: flex; flex: 1; min-height: 738px; }
.browser { flex: none; box-sizing: border-box; width: 234px; border-right: 4px solid #585858; background: #fff; color: #111; }
.panel-tabs { display: flex; align-items: center; height: 24px; background: #626262; color: #fff; }
.ptab { height: 24px; padding: 0 9px; }
.ptab.on { width: 44px; padding: 0; background: #fff; color: #55596a; }
.close { display: flex; align-items: center; justify-content: center; width: 28px; height: 24px; padding-right: 8px; background: #fff; }
.close svg { width: 10px; height: 10px; }
.pbtn { display: flex; align-items: center; justify-content: center; width: 23px; height: 24px; }
.pbtn.add { width: 18px; }
.pbtn svg { width: 14px; height: 14px; }
.grow { flex: 1; }
.tree { list-style: none; margin: 0; padding: 1px 0 0; }
.tree li { display: flex; align-items: center; height: 20px; white-space: nowrap; }
.guide { width: 16px; height: 20px; overflow: visible; }
.tree .icon { width: 16px; height: 16px; margin: 0 2px 0 3px; }
.tree .lock { margin: 0 2px; }
.tree input { appearance: none; box-sizing: border-box; width: 16px; height: 16px; margin: 0 0 0 3px; border: 1px solid #222; background: #fff; }
.tree input:checked::before {
  content: "";
  display: block;
  width: 14px;
  height: 14px;
  background: #2d70b3;
  clip-path: polygon(8% 42%, 42% 60%, 84% 14%, 96% 24%, 46% 92%, 34% 88%);
}
.viewport { flex: 1; min-width: 0; overflow: hidden; background: #ececec; }
.scene { width: 100%; height: 100%; }
</style>
